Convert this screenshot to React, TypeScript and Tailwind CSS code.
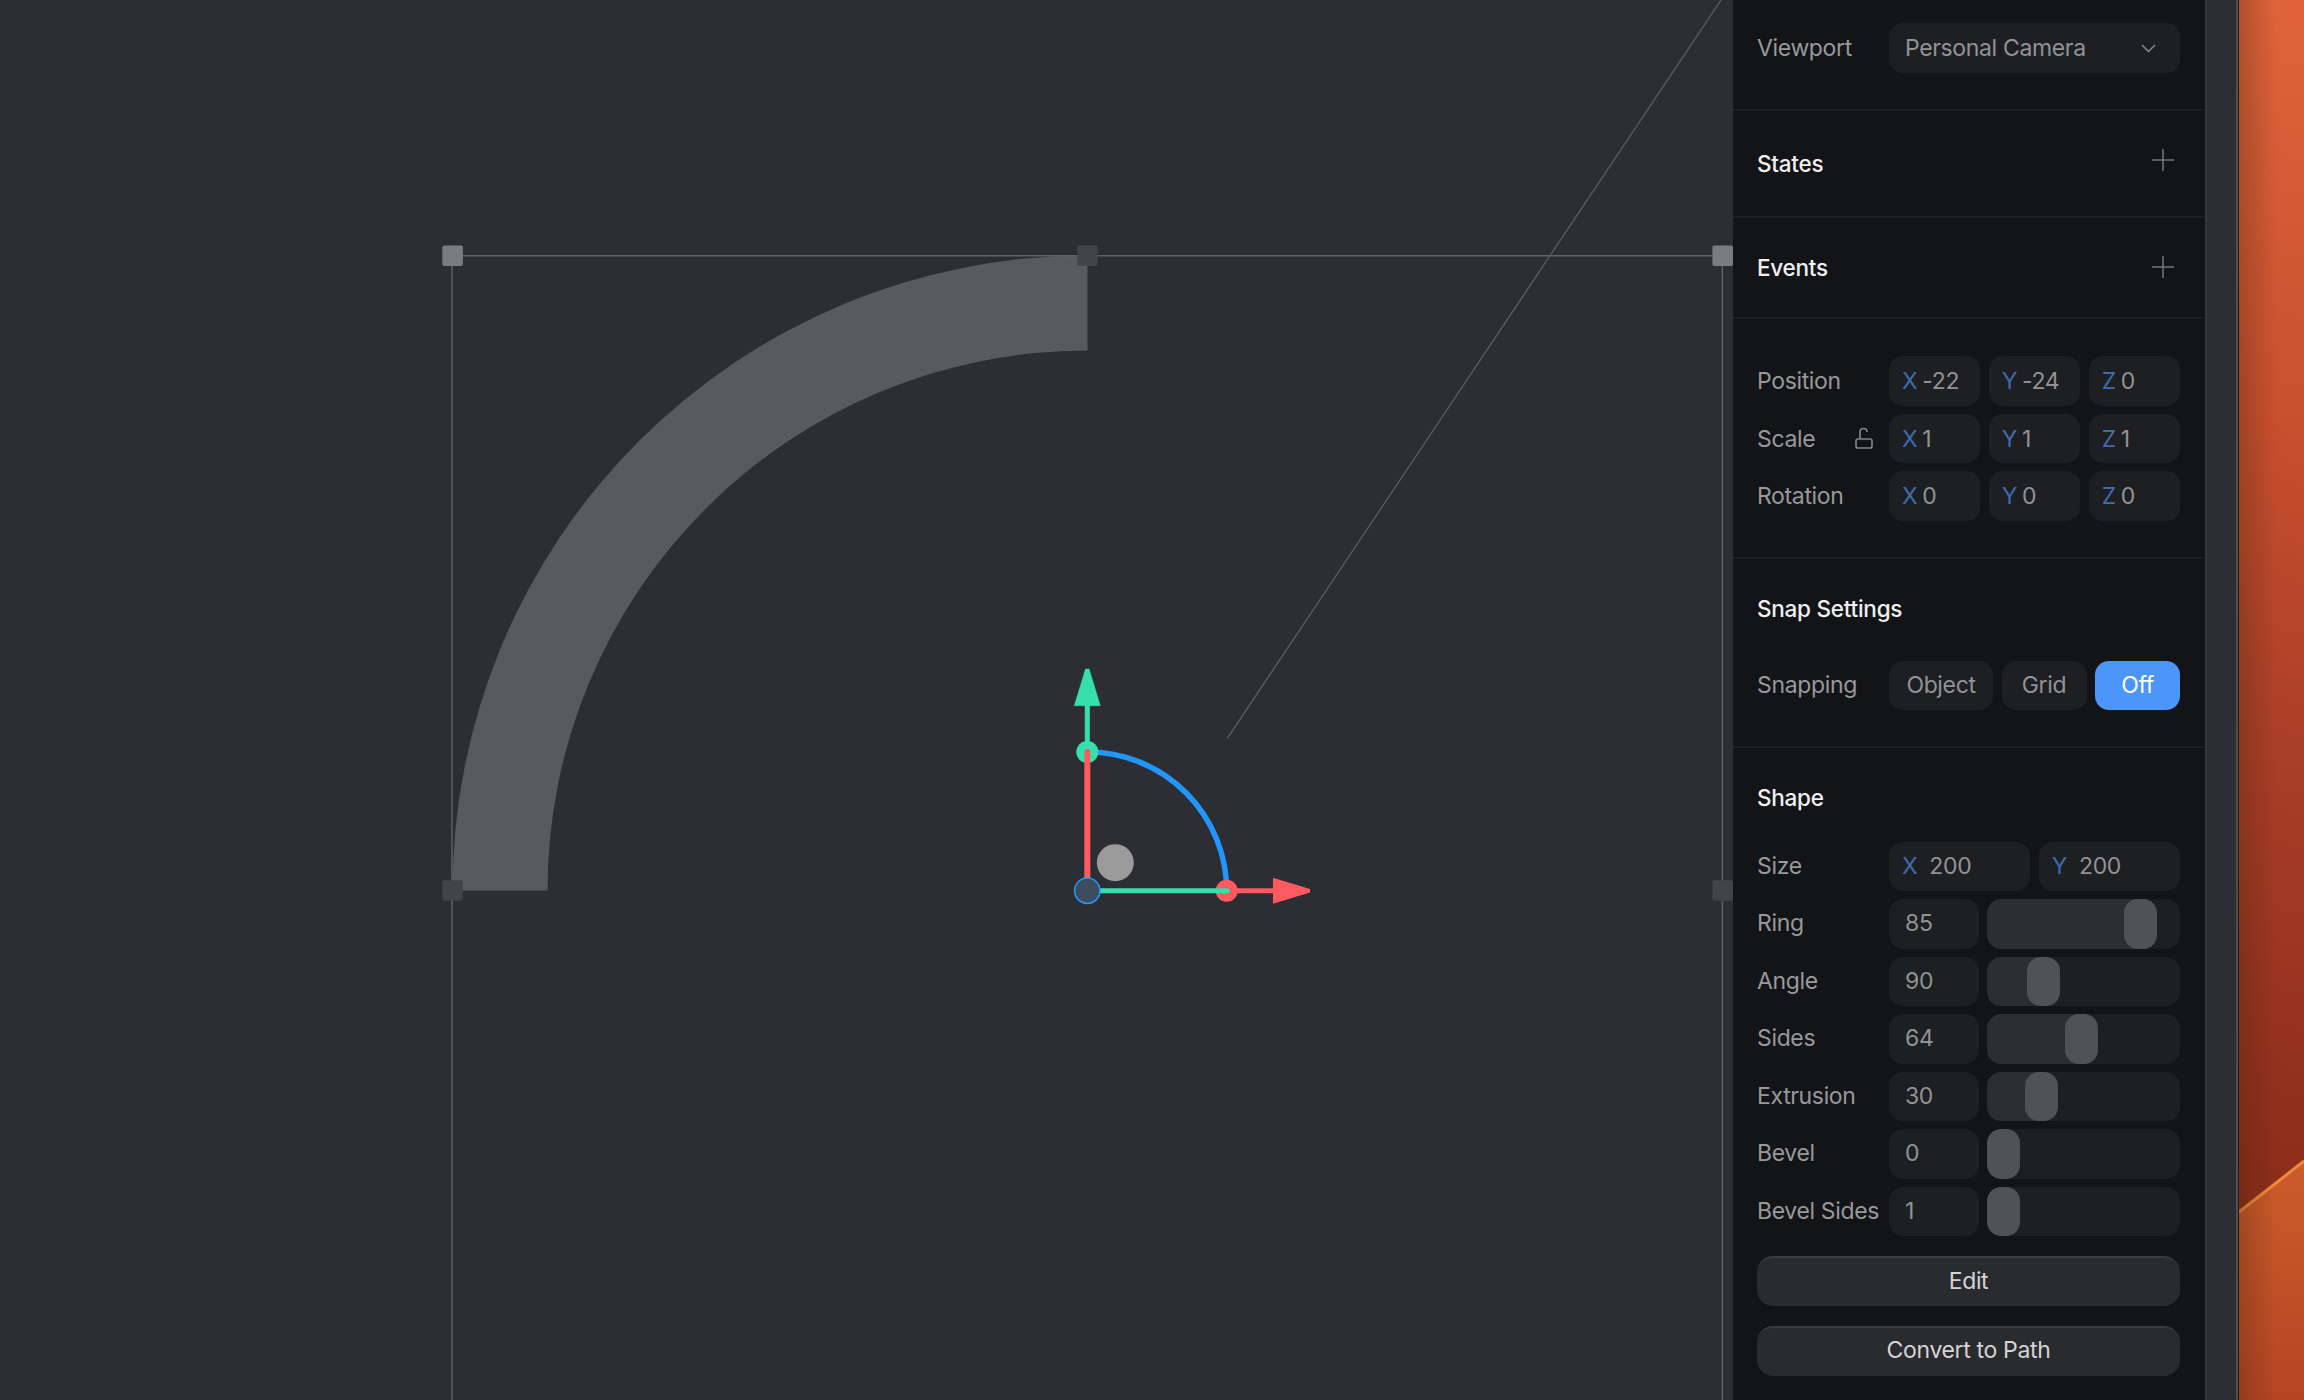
import React from 'react';

const Label = ({ children, nudge }: { children: React.ReactNode; nudge?: boolean }) => (
  <span className={`w-[132px] shrink-0 text-[#98999b] ${nudge ? 'pt-[2px]' : ''}`}>{children}</span>
);

const Cell = ({ axis, value, wide }: { axis: string; value: string; wide?: boolean }) => (
  <div className={`h-[49.5px] rounded-[14px] bg-[#1e1f23] flex items-center pl-[13px] text-[#929396] ${wide ? '' : 'pt-[2px]'}`}>
    <span className={`text-[#3f6cad] ${wide ? 'mr-[12px]' : 'mr-[5px]'}`}>{axis}</span>
    <span>{value}</span>
  </div>
);

const Heading = ({ children }: { children: React.ReactNode }) => (
  <span className="font-medium text-[22.5px] tracking-[-0.25px] text-[#f0f0f1]">{children}</span>
);

const PlusIcon = () => (
  <svg width="22" height="22" viewBox="0 0 22 22" fill="none" stroke="#76777a" strokeWidth="1.5">
    <path d="M11 0V22M0 11H22" />
  </svg>
);

const LockOpen = () => (
  <svg width="18" height="22" viewBox="0 0 18 22" fill="none" stroke="#828386" strokeWidth="1.7" className="absolute left-[98px] top-[13px]">
    <rect x="1" y="12" width="16" height="9" rx="2" />
    <path d="M5 12V5C5 3 6.5 1.5 8.5 1.5C10.5 1.5 12 3 12 5" />
  </svg>
);

const Triple = ({ label, values, lock }: { label: string; values: string[]; lock?: boolean }) => (
  <div className="relative flex items-center">
    <Label nudge>{label}</Label>
    {lock && <LockOpen />}
    <div className="grid grid-cols-3 gap-[8.5px] flex-1">
      <Cell axis="X" value={values[0]} />
      <Cell axis="Y" value={values[1]} />
      <Cell axis="Z" value={values[2]} />
    </div>
  </div>
);

const Slider = ({ label, value, thumb }: { label: string; value: string; thumb: number }) => (
  <div className="flex items-center">
    <Label>{label}</Label>
    <div className="w-[90px] h-[49.5px] rounded-[14px] bg-[#1e1f23] flex items-center pl-[16px] text-[#929396]">{value}</div>
    <div className="relative ml-[8px] flex-1 h-[49.5px] rounded-[14px] bg-[#1e1f23] overflow-hidden">
      <div className="absolute inset-y-0 left-0 rounded-l-[14px] bg-[#2d2e32]" style={{ width: thumb + 16 }} />
      <div className="absolute inset-y-0 w-[33px] rounded-[14px] bg-[#515255]" style={{ left: thumb }} />
    </div>
  </div>
);

const Gizmo = () => (
  <svg className="absolute inset-0" width="1733" height="1400" viewBox="0 0 1733 1400" fill="none">
    <path d="M1087.5 255.5A635 635 0 0 0 452.5 890.5L547.5 890.5A540 540 0 0 1 1087.5 350.5Z" fill="#595a5f" />
    <path d="M1721 0L1227.3 738.3" stroke="#5f6063" strokeWidth="1.2" />
    <path d="M452 255.7H1722M452 255.7V1400M1722.4 255.7V1400" stroke="#626366" strokeWidth="1.4" />
    <rect x="442.3" y="245.4" width="20.6" height="20.6" rx="2" fill="#7b7c7e" />
    <rect x="1077.2" y="245.4" width="20.6" height="20.6" rx="2" fill="#434448" />
    <rect x="1712.4" y="245.4" width="20.6" height="20.6" rx="2" fill="#7b7c7e" />
    <rect x="442.3" y="880.2" width="20.6" height="20.6" rx="2" fill="#434448" />
    <rect x="1712.4" y="880.2" width="20.6" height="20.6" rx="2" fill="#434448" />

    <path d="M1087.3 752A139 139 0 0 1 1226.7 890.7" stroke="#2196ff" strokeWidth="5.5" />
    <path d="M1087.3 705V752" stroke="#36e0ae" strokeWidth="5" />
    <path d="M1085.5 669H1089.1L1100.3 705.7H1074.3Z" fill="#36e0ae" stroke="#36e0ae" strokeWidth="0.5" strokeLinejoin="round" />
    <circle cx="1087.3" cy="752" r="11" fill="#36e0ae" />
    <path d="M1087.3 752V880" stroke="#ff5a5f" strokeWidth="6" strokeLinecap="round" />
    <circle cx="1226.7" cy="890.7" r="11" fill="#ff5a5f" />
    <path d="M1226.7 890.7H1274" stroke="#ff5a5f" strokeWidth="5" />
    <path d="M1273 877.7L1310 889V892.4L1273 903.7Z" fill="#ff5a5f" />
    <path d="M1097 890.7H1227" stroke="#36e0ae" strokeWidth="5" strokeLinecap="round" />
    <circle cx="1087.3" cy="890.7" r="12.7" fill="#3d4d5f" stroke="#2196ff" strokeWidth="1.6" />
    <circle cx="1115.3" cy="862.7" r="18.5" fill="#9b9b9b" />
  </svg>
);

export default function App() {
  return (
    <div className="flex w-[2304px] h-[1400px] overflow-hidden bg-[#2d2e33] font-['Inter','Liberation_Sans',sans-serif] text-[23px] leading-none tracking-[-0.35px]">
      <div className="relative w-[1733px] shrink-0">
        <Gizmo />
      </div>

      <div className="w-[472px] shrink-0 bg-[#131418] flex flex-col">
        <div className="h-[111px] shrink-0 border-b-2 border-[#1d1e22] pl-[24px] pr-[25px] pt-[23px] flex items-start">
          <div className="flex items-center w-full">
            <Label nudge>Viewport</Label>
            <div className="flex-1 h-[49.5px] rounded-[14px] bg-[#1e1f23] flex items-center justify-between pl-[16px] pr-[24px] pt-[2px] text-[#929396]">
              Personal Camera
              <svg width="15" height="9" viewBox="0 0 15 9" fill="none" stroke="#88898c" strokeWidth="1.5">
                <path d="M1 1L7.5 7.5L14 1" />
              </svg>
            </div>
          </div>
        </div>

        <div className="h-[107px] shrink-0 border-b-2 border-[#1d1e22] pl-[24px] pr-[31px] flex items-center justify-between">
          <span className="pt-[2px]"><Heading>States</Heading></span>
          <span className="-mt-[8px]"><PlusIcon /></span>
        </div>

        <div className="h-[101px] shrink-0 border-b-2 border-[#1d1e22] pl-[24px] pr-[31px] flex items-center justify-between">
          <span className="pt-[1px]"><Heading>Events</Heading></span>
          <span className="-mt-[2px]"><PlusIcon /></span>
        </div>

        <div className="h-[240px] shrink-0 border-b-2 border-[#1d1e22] pl-[24px] pr-[25px] pt-[37px] flex flex-col gap-[8px]">
          <Triple label="Position" values={['-22', '-24', '0']} />
          <Triple label="Scale" values={['1', '1', '1']} lock />
          <Triple label="Rotation" values={['0', '0', '0']} />
        </div>

        <div className="h-[189px] shrink-0 border-b-2 border-[#1d1e22] pl-[24px] pr-[25px] pt-[39px] flex flex-col">
          <Heading>Snap Settings</Heading>
          <div className="flex items-center mt-[40px]">
            <Label>Snapping</Label>
            <div className="flex-1 flex gap-[8.5px] text-[#929396]">
              <div className="w-[104px] h-[49.5px] rounded-[14px] bg-[#1e1f23] flex items-center justify-center">Object</div>
              <div className="w-[85px] h-[49.5px] rounded-[14px] bg-[#1e1f23] flex items-center justify-center">Grid</div>
              <div className="w-[85px] h-[49.5px] rounded-[14px] bg-[#4b96f8] text-white flex items-center justify-center">Off</div>
            </div>
          </div>
        </div>

        <div className="flex-1 pl-[24px] pr-[25px] pt-[39px] flex flex-col">
          <Heading>Shape</Heading>
          <div className="mt-[32px] flex flex-col gap-[8px]">
            <div className="flex items-center">
              <Label>Size</Label>
              <div className="flex-1 grid grid-cols-2 gap-[8.5px]">
                <Cell axis="X" value="200" wide />
                <Cell axis="Y" value="200" wide />
              </div>
            </div>
            <Slider label="Ring" value="85" thumb={137} />
            <Slider label="Angle" value="90" thumb={40} />
            <Slider label="Sides" value="64" thumb={78} />
            <Slider label="Extrusion" value="30" thumb={38} />
            <Slider label="Bevel" value="0" thumb={0} />
            <Slider label="Bevel Sides" value="1" thumb={0} />
          </div>
          <div className="mt-[20px] flex flex-col gap-[20px] text-[#d4d4d6]">
            <div className="h-[50px] pb-[1px] rounded-[16px] bg-[#2a2b2f] border-t-2 border-[#3a3b3f] flex items-center justify-center">Edit</div>
            <div className="h-[50px] pb-[3px] rounded-[16px] bg-[#2a2b2f] border-t-2 border-[#3a3b3f] flex items-center justify-center">Convert to Path</div>
          </div>
        </div>
      </div>

      <div className="w-[31px] shrink-0 bg-[#2d2e33] border-l-2 border-[#36373b]" />
      <div className="w-[2px] shrink-0 bg-[#4e4f53]" />
      <div className="w-[1px] shrink-0 bg-[#1c1c1e]" />

      <div className="relative flex-1 bg-[linear-gradient(195deg,#e0633b_0%,#c94f2e_30%,#ae4028_50%,#973220_72%,#8a2c19_86%,#8a2c19_100%)]">
        <svg className="absolute inset-0" width="65" height="1400" viewBox="0 0 65 1400">
          <defs>
            <linearGradient id="wall" x1="0" y1="0" x2="0" y2="1">
              <stop offset="0" stopColor="#cc5c2a" />
              <stop offset="1" stopColor="#b64424" />
            </linearGradient>
          </defs>
          <path d="M0 1212L65 1161V1400H0Z" fill="url(#wall)" />
          <path d="M0 1212L65 1161" stroke="#ee8a3a" strokeWidth="3" />
        </svg>
        <div className="absolute inset-y-0 left-0 w-[36px] bg-[linear-gradient(90deg,rgba(70,40,15,0.3),rgba(70,40,15,0))]" />
      </div>
    </div>
  );
}
